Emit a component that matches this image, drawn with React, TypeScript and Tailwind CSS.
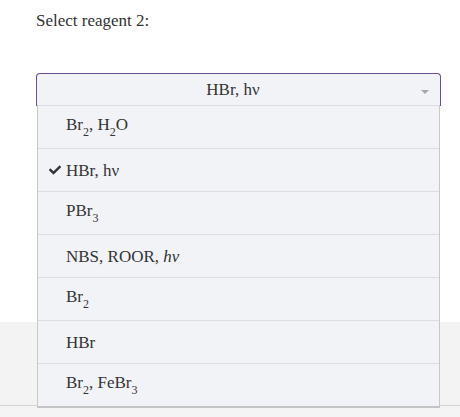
import { FaCheck } from 'react-icons/fa';

type Part = { t: string; sub?: boolean; i?: boolean };

const options: Part[][] = [
  [{ t: 'Br' }, { t: '2', sub: true }, { t: ', H' }, { t: '2', sub: true }, { t: 'O' }],
  [{ t: 'HBr, hν' }],
  [{ t: 'PBr' }, { t: '3', sub: true }],
  [{ t: 'NBS, ROOR, ' }, { t: 'hν', i: true }],
  [{ t: 'Br' }, { t: '2', sub: true }],
  [{ t: 'HBr' }],
  [{ t: 'Br' }, { t: '2', sub: true }, { t: ', FeBr' }, { t: '3', sub: true }],
];

function Formula({ parts }: { parts: Part[] }) {
  return (
    <span className="leading-none">
      {parts.map((p, i) =>
        p.sub ? (
          <span key={i} className="text-[12px] align-[-6px]">{p.t}</span>
        ) : p.i ? (
          <i key={i}>{p.t}</i>
        ) : (
          <span key={i}>{p.t}</span>
        )
      )}
    </span>
  );
}

export default function App() {
  const selected = 1;
  return (
    <div className="w-[460px] h-[417px] bg-white text-[#333] font-['Liberation_Serif',serif] text-[17px] overflow-hidden">
      <div className="h-[322px] px-9 pt-[9px]">
        <p className="leading-6">Select reagent 2:</p>
        <div className="relative mt-[40px] w-[405px]">
          <div className="h-[33px] bg-[#f2f3f7] border border-b-0 border-[#6b4f96] rounded-t-[4px] grid grid-cols-[1fr_auto_1fr] items-center pr-[11px]">
            <span />
            <span>HBr, hν</span>
            <span className="justify-self-end w-0 h-0 mt-[3px] border-l-[4px] border-r-[4px] border-t-[4px] border-l-transparent border-r-transparent border-t-[#a8a8a8]" />
          </div>
          <ul className="absolute left-px right-px top-[32px] z-10 bg-[#f2f3f7] border border-t-0 border-[#c8c8c8] border-b-2 border-b-[#c4c4c4]">
            {options.map((o, i) => (
              <li
                key={i}
                className="h-[43px] border-t border-[#dcdde0] flex items-center pl-[11px]"
              >
                <span className="w-[17px] flex">
                  {i === selected && <FaCheck className="text-[#333]" size={12} />}
                </span>
                <Formula parts={o} />
              </li>
            ))}
          </ul>
        </div>
      </div>
      <div className="bg-[#f3f3f3]">
        <div className="h-[84px] border-b border-[#d4d4d4]" />
        <div className="h-[11px] bg-[#f4f4f4]" />
      </div>
    </div>
  );
}
